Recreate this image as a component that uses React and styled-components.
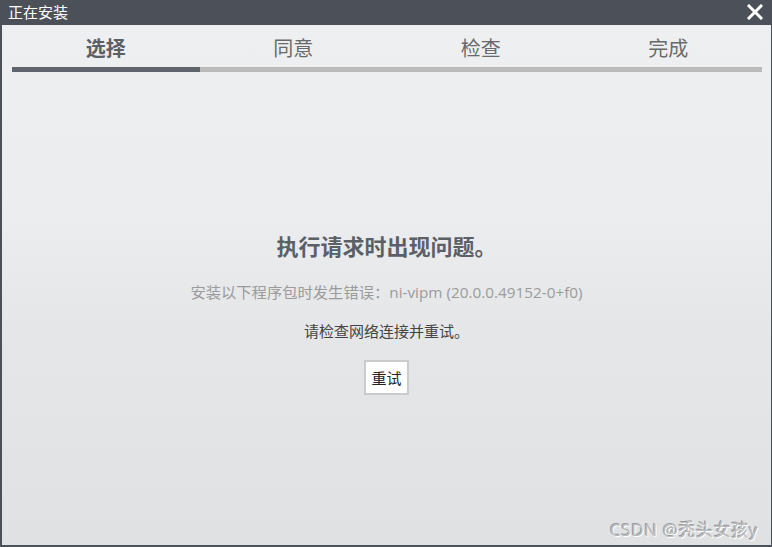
import React from "react";
import styled, { createGlobalStyle } from "styled-components";

const Global = createGlobalStyle`
  html, body { margin: 0; padding: 0; }
  body { width: 772px; height: 547px; overflow: hidden; font-family: "Open Sans", "Noto Sans CJK SC", sans-serif; }
`;

const Window = styled.div`
  width: 772px;
  height: 547px;
  box-sizing: border-box;
  display: flex;
  flex-direction: column;
  background: #4b5059;
  padding: 0 1px 2px 2px;
`;

const TitleBar = styled.div`
  height: 25px;
  flex: none;
  display: flex;
  align-items: center;
  justify-content: space-between;
  padding: 0 8px 0 6px;
  color: #ffffff;
`;

const Title = styled.span`
  font-family: "Noto Sans CJK SC", sans-serif;
  font-size: 15px;
  line-height: 1;
  margin-top: -2px;
`;

const Close = styled.svg`
  width: 16px;
  height: 16px;
  margin-top: -2px;
`;

const Body = styled.div`
  flex: 1;
  position: relative;
  display: flex;
  flex-direction: column;
  background: linear-gradient(#eeeff1 0%, #ecedef 35%, #e4e6e8 60%, #dfe1e2 100%);
`;

const Steps = styled.div`
  display: grid;
  grid-template-columns: repeat(4, 1fr);
  margin: 0 9px 0 10px;
  padding-top: 9px;
`;

const Step = styled.div`
  display: flex;
  flex-direction: column;
  align-items: center;
`;

const StepLabel = styled.div`
  font-family: "Noto Sans CJK SC", sans-serif;
  font-size: 20px;
  line-height: 28px;
  height: 33px;
  font-weight: ${(p) => (p.$active ? 700 : 400)};
  color: ${(p) => (p.$active ? "#5b6067" : "#6a6a6a")};
`;

const StepBar = styled.div`
  align-self: stretch;
  height: 5px;
  background: ${(p) => (p.$active ? "#5f656c" : "#bababa")};
`;

const Content = styled.div`
  display: flex;
  flex-direction: column;
  align-items: center;
  padding-top: 158px;
`;

const Heading = styled.div`
  font-family: "Noto Sans CJK SC", sans-serif;
  font-size: 22px;
  font-weight: 700;
  color: #5b6067;
  line-height: 30px;
`;

const ErrorLine = styled.div`
  margin-top: 22px;
  font-family: "Open Sans", "Noto Sans CJK SC", sans-serif;
  font-size: 15.3px;
  color: #9b9b9b;
  line-height: 20px;
`;

const Hint = styled.div`
  margin-top: 19px;
  font-family: "Noto Sans CJK SC", sans-serif;
  font-size: 15px;
  color: #444444;
  line-height: 20px;
`;

const RetryButton = styled.button`
  margin-top: 19px;
  width: 45px;
  height: 35px;
  padding: 0;
  background: #ffffff;
  border: 2px solid #c9cbcc;
  font-family: "Noto Sans CJK SC", sans-serif;
  font-size: 15px;
  color: #222222;
  cursor: pointer;
`;

const Watermark = styled.div`
  position: absolute;
  right: 13px;
  bottom: 4px;
  font-family: "Open Sans", "Noto Sans CJK SC", sans-serif;
  font-size: 17px;
  color: #b9bbbd;
  text-shadow: 1px 1px 0 #ffffff, -1px -1px 0 #9a9c9e;
  letter-spacing: 0.6px;
`;

const steps = ["选择", "同意", "检查", "完成"];

export default function App() {
  return (
    <>
      <Global />
      <Window>
        <TitleBar>
          <Title>正在安装</Title>
          <Close viewBox="0 0 16 16">
            <path d="M2 2 L14 14 M14 2 L2 14" stroke="#ffffff" strokeWidth="3" strokeLinecap="square" />
          </Close>
        </TitleBar>
        <Body>
          <Steps>
            {steps.map((s, i) => (
              <Step key={s}>
                <StepLabel $active={i === 0}>{s}</StepLabel>
                <StepBar $active={i === 0} />
              </Step>
            ))}
          </Steps>
          <Content>
            <Heading>执行请求时出现问题。</Heading>
            <ErrorLine>安装以下程序包时发生错误：ni-vipm (20.0.0.49152-0+f0)</ErrorLine>
            <Hint>请检查网络连接并重试。</Hint>
            <RetryButton>重试</RetryButton>
          </Content>
          <Watermark>CSDN @秃头女孩y</Watermark>
        </Body>
      </Window>
    </>
  );
}
